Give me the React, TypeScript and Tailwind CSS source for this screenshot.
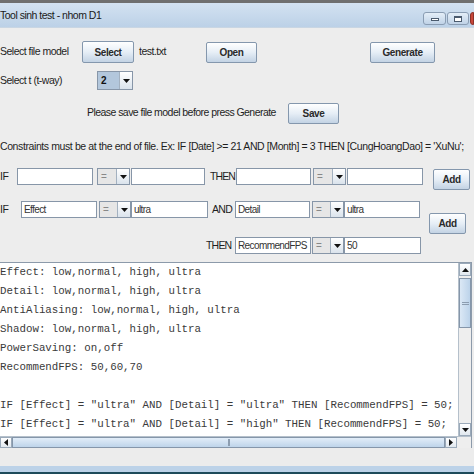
import React from "react";

function Btn({ label, className = "" }: { label: string; className?: string }) {
  return (
    <div
      className={`flex items-center justify-center border border-[#8497ad] rounded-[2px] bg-linear-to-b from-[#ffffff] via-[#e6eef6] to-[#c3d3e4] text-[10px] font-bold tracking-[-0.4px] text-[#2a2a2a] shrink-0 ${className}`}
    >
      {label}
    </div>
  );
}

function Field({ value = "", className = "" }: { value?: string; className?: string }) {
  return (
    <div
      className={`h-[17px] shrink-0 bg-white border border-[#8796a8] flex items-center pl-[2px] text-[10px] tracking-[-0.6px] text-[#333] overflow-hidden whitespace-nowrap ${className}`}
    >
      {value}
    </div>
  );
}

function Arrow() {
  return (
    <svg width="7" height="4" viewBox="0 0 7 4">
      <path d="M0 0H7L3.5 4Z" fill="#111" />
    </svg>
  );
}

function Combo({ value = "=", sel = false, className = "" }: { value?: string; sel?: boolean; className?: string }) {
  return (
    <div className={`flex shrink-0 border border-[#8796a8] ${className}`}>
      <div
        className={`flex-1 flex items-center pl-[3px] text-[10px] ${sel ? "bg-[#b3c7dc] text-[#111] font-bold" : "bg-[#e6e6e6] text-[#888]"}`}
      >
        {value}
      </div>
      <div className="w-[13px] border-l border-[#a3b1c0] bg-linear-to-b from-[#ffffff] to-[#dae3ec] flex items-center justify-center">
        <Arrow />
      </div>
    </div>
  );
}

const lines = [
  "Effect: low,normal, high, ultra",
  "Detail: low,normal, high, ultra",
  "AntiAliasing: low,normal, high, ultra",
  "Shadow: low,normal, high, ultra",
  "PowerSaving: on,off",
  "RecommendFPS: 50,60,70",
  " ",
  'IF [Effect] = "ultra" AND [Detail] = "ultra" THEN [RecommendFPS] = 50;',
  'IF [Effect] = "ultra" AND [Detail] = "high" THEN [RecommendFPS] = 50;',
];

function ScrollBtn({ dir, className = "" }: { dir: "up" | "down" | "left" | "right"; className?: string }) {
  const d =
    dir === "up"
      ? "M0 4H7L3.5 0Z"
      : dir === "down"
      ? "M0 0H7L3.5 4Z"
      : dir === "left"
      ? "M4 0V7L0 3.5Z"
      : "M0 0V7L4 3.5Z";
  const vertical = dir === "up" || dir === "down";
  return (
    <div
      className={`shrink-0 flex items-center justify-center border border-[#9aa9b9] bg-linear-to-b from-[#ffffff] to-[#e1e8ef] ${vertical ? "h-[13px]" : "w-[12px]"} ${className}`}
    >
      <svg width={vertical ? 7 : 4} height={vertical ? 4 : 7} viewBox={vertical ? "0 0 7 4" : "0 0 4 7"}>
        <path d={d} fill="#111" />
      </svg>
    </div>
  );
}

export default function App() {
  return (
    <div className="w-[474px] h-[474px] overflow-hidden flex flex-col bg-[#ededed] text-[#1e1e1e] font-['Liberation_Sans',Arial,sans-serif]">
      {/* top strip */}
      <div className="h-[3px] shrink-0 bg-[#6f6f6f]" />
      {/* title bar */}
      <div className="h-[25px] shrink-0 flex items-center bg-linear-to-b from-[#d3e2f1] to-[#bcd1e7] border-b border-[#c9d6e3]">
        <div className="flex-1 text-[10.5px] tracking-[-0.5px] text-[#1a1a1a] pt-[2px]">Tool sinh test - nhom D1</div>
        <div className="flex self-start mt-[9px] gap-[1px]">
          <div className="w-[23px] h-[13px] rounded-[3px] border border-[#8a9db3] bg-linear-to-b from-[#e4eef8] to-[#c0d3e7] flex items-end justify-center pb-[3px]">
            <div className="w-[8px] h-[3px] bg-white border border-[#4b5b6e]" />
          </div>
          <div className="w-[22px] h-[13px] rounded-[3px] border border-[#8a9db3] bg-linear-to-b from-[#e4eef8] to-[#c0d3e7] flex items-center justify-center">
            <div className="w-[8px] h-[6px] border border-[#4b5b6e] border-t-2 bg-white" />
          </div>
          <div className="w-[4px] h-[13px] rounded-l-[3px] bg-[#c8473b] border border-[#8c3027]" />
        </div>
      </div>

      {/* row 1 */}
      <div className="h-[22px] mt-[13px] flex items-center shrink-0 text-[10.5px] tracking-[-0.5px]">
        <div className="w-[82px] shrink-0">Select file model</div>
        <Btn label="Select" className="w-[52px] h-[22px]" />
        <div className="w-[72px] shrink-0 pl-[5px]">test.txt</div>
        <Btn label="Open" className="w-[51px] h-[21px]" />
        <div className="w-[113px] shrink-0" />
        <Btn label="Generate" className="w-[65px] h-[21px]" />
      </div>

      {/* row 2 */}
      <div className="h-[19px] mt-[8px] flex items-center shrink-0 text-[10.5px] tracking-[-0.5px]">
        <div className="w-[97px] shrink-0">Select t (t-way)</div>
        <Combo value="2" sel className="w-[36px] h-[19px]" />
      </div>

      {/* row 3 */}
      <div className="h-[22px] mt-[12px] flex items-center shrink-0 text-[10.5px] tracking-[-0.55px]">
        <div className="w-[87px] shrink-0" />
        <div className="w-[201px] shrink-0">Please save file model before press Generate</div>
        <Btn label="Save" className="w-[51px] h-[21px]" />
      </div>

      {/* row 4 */}
      <div className="h-[14px] mt-[16px] flex items-center shrink-0 text-[10.5px] tracking-[-0.4px] whitespace-nowrap">
        Constraints must be at the end of file. Ex: IF [Date] &gt;= 21 AND [Month] = 3 THEN [CungHoangDao] = 'XuNu';
      </div>

      {/* row 5 */}
      <div className="h-[22px] mt-[14px] flex items-start shrink-0 text-[10.5px] tracking-[-0.5px]">
        <div className="w-[17px] h-[17px] shrink-0 flex items-center">IF</div>
        <Field className="w-[76px]" />
        <Combo className="w-[33px] h-[17px] ml-[4px]" />
        <Field className="w-[74px] ml-[1px]" />
        <div className="w-[31px] h-[17px] shrink-0 flex items-center pl-[5px] tracking-[-0.9px]">THEN</div>
        <Field className="w-[75px]" />
        <Combo className="w-[33px] h-[17px] ml-[2px]" />
        <Field className="w-[76px] ml-[1px]" />
        <Btn label="Add" className="w-[37px] h-[21px] ml-[10px] mt-[1px]" />
      </div>

      {/* rows 6-7 */}
      <div className="h-[52px] mt-[11px] flex items-start shrink-0 text-[10.5px] tracking-[-0.5px]">
        <div className="w-[422px] shrink-0 flex flex-col gap-[19px]">
          <div className="flex items-center h-[17px]">
            <div className="w-[21px] shrink-0">IF</div>
            <Field value="Effect" className="w-[76px]" />
            <Combo className="w-[32px] h-[17px] ml-[2px]" />
            <Field value="ultra" className="w-[77px]" />
            <div className="w-[27px] shrink-0 pl-[4px] tracking-[-0.7px]">AND</div>
            <Field value="Detail" className="w-[75px]" />
            <Combo className="w-[32px] h-[17px] ml-[2px]" />
            <Field value="ultra" className="w-[76px]" />
          </div>
          <div className="flex items-center h-[17px]">
            <div className="w-[206px] shrink-0" />
            <div className="w-[29px] shrink-0 tracking-[-0.8px]">THEN</div>
            <Field value="RecommendFPS" className="w-[76px]" />
            <Combo className="w-[32px] h-[17px] ml-[1px]" />
            <Field value="50" className="w-[77px]" />
          </div>
        </div>
        <Btn label="Add" className="w-[37px] h-[21px] ml-[7px] mt-[12px]" />
      </div>

      {/* text area */}
      <div className="h-[186px] mt-[9px] mr-[2px] shrink-0 flex flex-col border-t border-r border-[#8c9aaa]">
        <div className="flex-1 flex min-h-0">
          <div className="flex-1 bg-white overflow-hidden font-['Liberation_Mono','Courier_New',monospace] text-[10.8px] leading-[19px] text-[#3a3a3a] whitespace-pre">
            {lines.map((l, i) => (
              <div key={i}>{l}</div>
            ))}
          </div>
          {/* vertical scrollbar */}
          <div className="w-[13px] shrink-0 flex flex-col bg-[#eeeeee] border-l border-[#b5c0cb]">
            <ScrollBtn dir="up" />
            <div className="mt-[2px] h-[50px] border border-[#8596aa] bg-linear-to-r from-[#dbe8f5] to-[#bcd3ea] flex flex-col items-center justify-center gap-[1px]">
              <div className="w-[7px] h-[1px] bg-[#8c9db0]" />
              <div className="w-[7px] h-[1px] bg-[#8c9db0]" />
            </div>
            <div className="flex-1" />
            <ScrollBtn dir="down" />
          </div>
        </div>
        {/* horizontal scrollbar */}
        <div className="h-[12px] shrink-0 flex border-t border-[#b5c0cb]">
          <ScrollBtn dir="left" />
          <div className="flex-1 border border-[#8596aa] bg-linear-to-b from-[#e2edf8] to-[#bed4ea] flex items-center justify-center">
            <div className="w-[2px] h-[7px] border-x border-[#8c9db0]" />
          </div>
          <ScrollBtn dir="right" />
          <div className="w-[14px] shrink-0 bg-[#eeeeee]" />
        </div>
      </div>

      {/* bottom */}
      <div className="h-[18px] shrink-0 bg-[#ececec]" />
      <div className="h-[6px] shrink-0 bg-[#bcd2e8]" />
      <div className="h-[2px] shrink-0 bg-[#1d4a5a]" />
    </div>
  );
}
